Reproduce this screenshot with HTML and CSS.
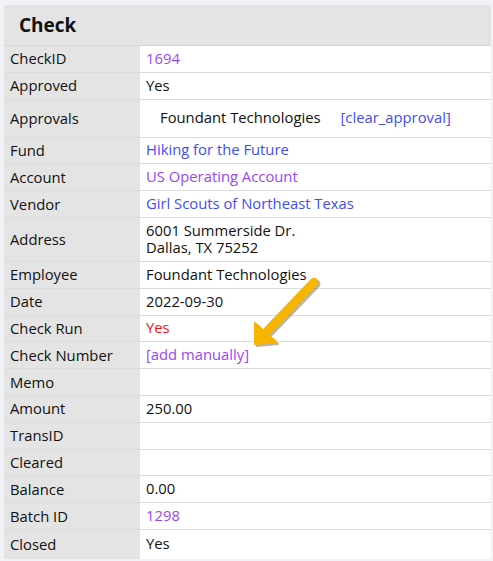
FILE: index.html
```html
<!DOCTYPE html>
<html>
<head>
<meta charset="utf-8">
<link rel="stylesheet" href="styles.css">
</head>
<body>
<div class="panel">
  <div class="header"><h1>Check</h1></div>
  <div class="rows">
    <div class="row"><div class="label">CheckID</div><div class="value"><a class="visited">1694</a></div></div>
    <div class="row"><div class="label">Approved</div><div class="value">Yes</div></div>
    <div class="row tall"><div class="label">Approvals</div><div class="value approvals"><span>Foundant Technologies</span><a class="link">[clear_approval]</a></div></div>
    <div class="row"><div class="label">Fund</div><div class="value"><a class="link">Hiking for the Future</a></div></div>
    <div class="row"><div class="label">Account</div><div class="value"><a class="visited">US Operating Account</a></div></div>
    <div class="row"><div class="label">Vendor</div><div class="value"><a class="link">Girl Scouts of Northeast Texas</a></div></div>
    <div class="row addr"><div class="label">Address</div><div class="value">6001 Summerside Dr.<br>Dallas, TX 75252</div></div>
    <div class="row"><div class="label">Employee</div><div class="value">Foundant Technologies</div></div>
    <div class="row"><div class="label">Date</div><div class="value">2022-09-30</div></div>
    <div class="row"><div class="label">Check Run</div><div class="value red">Yes</div></div>
    <div class="row"><div class="label">Check Number</div><div class="value"><a class="visited">[add manually]</a></div></div>
    <div class="row"><div class="label">Memo</div><div class="value"></div></div>
    <div class="row"><div class="label">Amount</div><div class="value">250.00</div></div>
    <div class="row"><div class="label">TransID</div><div class="value"></div></div>
    <div class="row"><div class="label">Cleared</div><div class="value"></div></div>
    <div class="row"><div class="label">Balance</div><div class="value">0.00</div></div>
    <div class="row"><div class="label">Batch ID</div><div class="value"><a class="visited">1298</a></div></div>
    <div class="row last"><div class="label">Closed</div><div class="value">Yes</div></div>
  </div>
  <svg class="arrow" width="80" height="80" viewBox="0 0 80 80">
    <g transform="translate(2,2)" fill="#6b5a2a" opacity="0.45" stroke="#6b5a2a">
      <line x1="62" y1="14" x2="16" y2="62" stroke-width="9" stroke-linecap="round"/>
      <polygon points="3,76 3,55 24,74" stroke-width="2" stroke-linejoin="round"/>
    </g>
    <line x1="62" y1="14" x2="16" y2="62" stroke="#f7b500" stroke-width="8.5" stroke-linecap="round"/>
    <polygon points="3,76 3,55 24,74" fill="#f7b500" stroke="#f7b500" stroke-width="2" stroke-linejoin="round"/>
  </svg>
</div>
</body>
</html>
```
FILE: styles.css
```css
html, body {
  margin: 0;
  padding: 0;
}
body {
  background: #f1f2f7;
  font-family: "Open Sans", "Noto Sans", sans-serif;
  font-size: 14.8px;
  color: #111;
  padding: 5px 2px 3px 4px;
}
.panel {
  position: relative;
  width: 487px;
  background: #fff;
}
.header {
  background: #e4e4e4;
  height: 40px;
  border-bottom: 1px solid #d6d6d6;
  display: flex;
  align-items: center;
}
h1 {
  margin: 0 0 0 15px;
  font-size: 19px;
  font-weight: bold;
  color: #111;
}
.row {
  display: flex;
  height: 25.8px;
  border-bottom: 1px solid #dcdcdc;
}
.row.tall { height: 37px; }
.row.addr { height: 43px; }
.row.last { height: 29px; border-bottom: none; }
.label {
  width: 130px;
  flex: none;
  background: #e4e4e4;
  padding-left: 6px;
  padding-bottom: 1px;
  display: flex;
  align-items: center;
}
.value {
  flex: 1;
  padding-left: 6px;
  padding-bottom: 1px;
  display: flex;
  align-items: center;
  line-height: 17px;
}
.addr .value { display: block; padding-top: 4px; }
.approvals { padding-left: 20px; gap: 20px; }
.link { color: #3f4ef0; }
.visited { color: #9a47f2; }
.red { color: #f21111; }
.arrow {
  position: absolute;
  left: 248px;
  top: 263px;
}
```
